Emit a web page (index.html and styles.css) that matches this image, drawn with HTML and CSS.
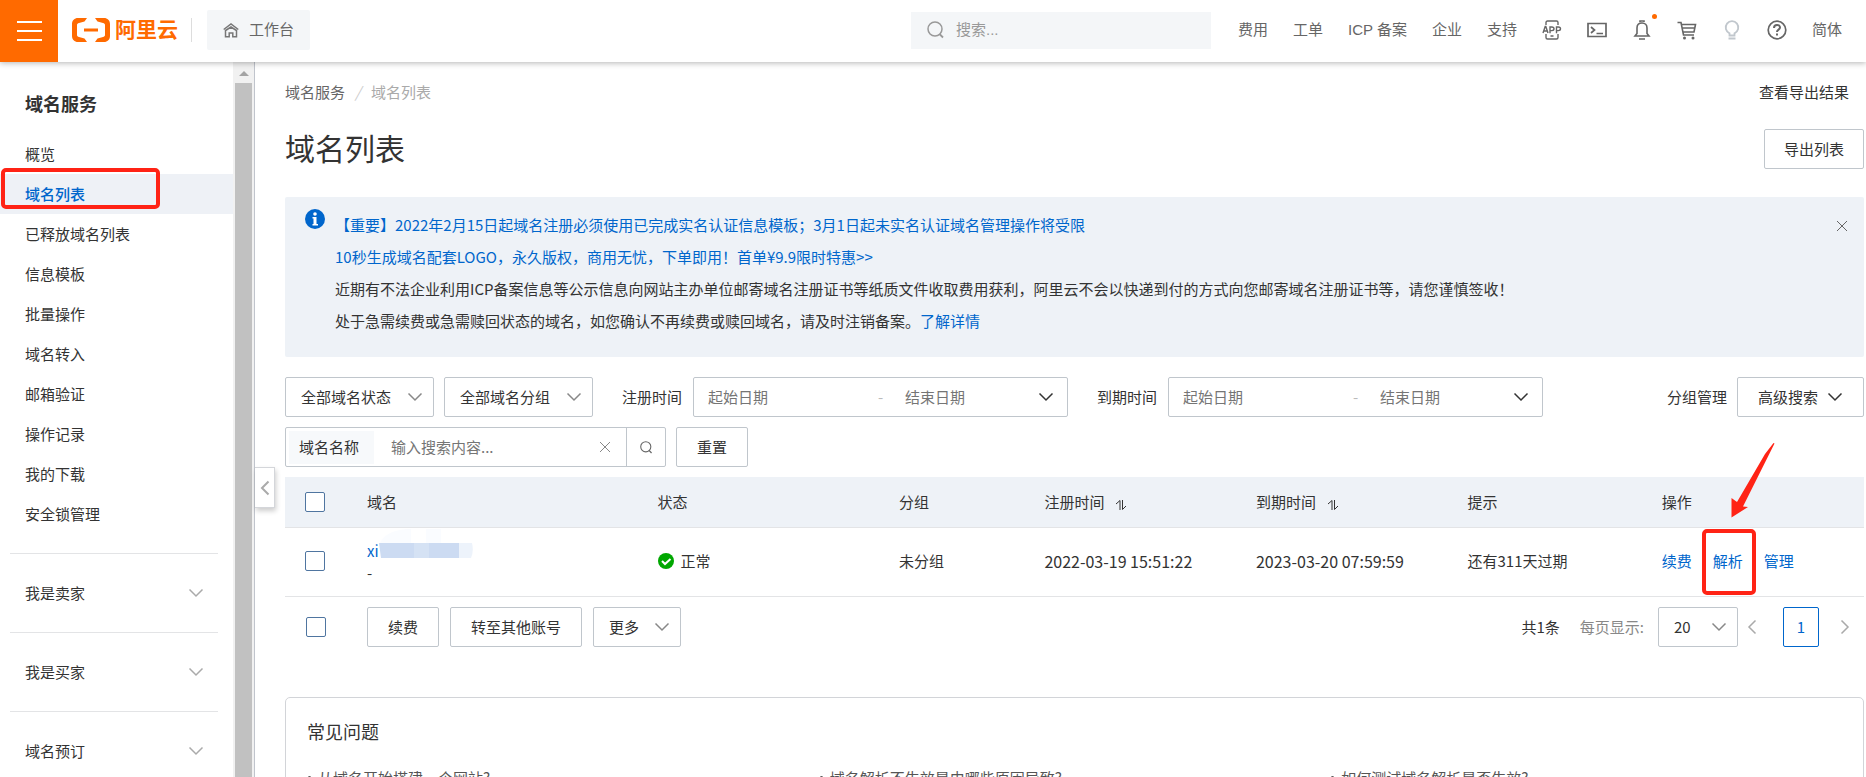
FILE: index.html
```html
<!DOCTYPE html>
<html lang="zh-CN">
<head>
<meta charset="utf-8">
<title>域名列表</title>
<link rel="stylesheet" href="styles.css">
</head>
<body>
<svg class="defs" aria-hidden="true">
  <symbol id="chevron" viewBox="0 0 16 10"><path d="M1.5 1.5 8 8l6.500-6.500" fill="none" stroke="currentColor" stroke-width="1.500"/></symbol>
  <symbol id="cross" viewBox="0 0 12 12"><path d="m1 1 10 10M11 1 1 11" fill="none" stroke="currentColor"/></symbol>
  <symbol id="lens" viewBox="0 0 18 18"><circle cx="8" cy="8" r="7" fill="none" stroke="currentColor" stroke-width="1.500"/><path d="m12.500 13 3.500 3.500" stroke="currentColor" stroke-width="1.800"/></symbol>
  <symbol id="sort" viewBox="0 0 12 12"><path d="M1 5 5 1.500V11M7.500 1v9.500L11 7" fill="none" stroke="currentColor"/></symbol>
</svg>

<header class="topbar">
  <button class="menu-button" aria-label="菜单"><svg width="25" height="20" viewBox="0 0 25 20"><path d="M0 1h25M0 10h25M0 19h25" stroke="#fff" stroke-width="2"/></svg></button>
  <a class="logo" href="#">
    <svg width="38" height="24" viewBox="0 0 38 24"><path d="M15 0H6C2.500 0 0 2.500 0 6v12c0 3.500 2.500 6 6 6h9l-2.500-3.500-5.500-1.500c-1.200-.3-2-1-2-2V7c0-1 .8-1.700 2-2l5.500-1.500zM23 0h9c3.500 0 6 2.500 6 6v12c0 3.500-2.500 6-6 6h-9l2.500-3.500 5.500-1.500c1.200-.3 2-1 2-2V7c0-1-.8-1.700-2-2l-5.500-1.500zM12 10.500h14v3H12z" fill="#ff6a00"/></svg>
    <span>阿里云</span>
  </a>
  <a class="workbench" href="#">
    <svg width="16" height="15" viewBox="0 0 16 15"><path d="M.7 6.500 8 1l7.300 5.500M2.500 7.500v6.300h3.700V10h3.600v3.800h3.700V7.500L8 4z" fill="none" stroke="#777" stroke-width="1.500"/></svg>
    工作台
  </a>
  <label class="top-search"><svg width="18" height="18"><use href="#lens"/></svg><input type="text" placeholder="搜索..." aria-label="搜索"></label>
  <nav class="top-nav">
    <a href="#">费用</a><a href="#">工单</a><a href="#">ICP 备案</a><a href="#">企业</a><a href="#">支持</a>
    <button aria-label="移动应用"><svg width="20" height="20" viewBox="0 0 20 20"><path d="M4 5V2.500Q4 1 5.500 1h9Q16 1 16 2.500V5M4 14v3.500Q4 19 5.500 19h9q1.500 0 1.500-1.500V14M8.500 16h3M1 13l2.200-6.500h.6L6 13M1.800 11h3.500M8 13.200V7h1.800Q12 7 12 8.800t-2.200 1.800H8M14.500 13.200V7h1.800q2.200 0 2.200 1.800t-2.200 1.800h-1.800" fill="none" stroke="currentColor" stroke-width="1.400"/></svg></button>
    <button aria-label="命令行"><svg width="20" height="20" viewBox="0 0 20 20"><path d="M1 3.500h18v13H1zM4 7l3.500 3L4 13M9.500 13.500H16" fill="none" stroke="currentColor" stroke-width="1.700"/></svg></button>
    <button class="bell" aria-label="通知"><svg width="20" height="20" viewBox="0 0 20 20"><path d="M3 16h14l-2-2.500V8c0-3-2-5-5-5S5 5 5 8v5.500zM8 2V1h4v1M7 19h6" fill="none" stroke="currentColor" stroke-width="1.600"/></svg><span class="dot"></span></button>
    <button aria-label="购物车"><svg width="20" height="20" viewBox="0 0 20 20"><path d="M.5 2.500H4L6.500 15H17M5 4.500h13.500L17 12H6M5.500 8h12" fill="none" stroke="currentColor" stroke-width="1.600"/><circle cx="7.500" cy="18" r="1.500" fill="currentColor"/><circle cx="16" cy="18" r="1.500" fill="currentColor"/></svg></button>
    <button class="pale" aria-label="提示"><svg width="20" height="20" viewBox="0 0 20 20"><path d="M7.500 15.500v-2.200a6.300 6.300 0 1 1 5 0v2.200zM6.500 18.500h7" fill="none" stroke="currentColor" stroke-width="1.800"/></svg></button>
    <button aria-label="帮助"><svg width="20" height="20" viewBox="0 0 20 20"><circle cx="10" cy="10" r="8.800" fill="none" stroke="currentColor" stroke-width="1.700"/><path d="M7 8c0-4 6-4 6-.5 0 2.200-3 2-3 4.500M10 13.500v2" fill="none" stroke="currentColor" stroke-width="2"/></svg></button>
    <a href="#">简体</a>
  </nav>
</header>

<div class="shell">
  <aside class="sidebar">
    <div class="side-content">
      <h2>域名服务</h2>
      <nav class="side-nav">
        <a href="#">概览</a>
        <a href="#" class="active">域名列表<span class="mark mark-nav"></span></a>
        <a href="#">已释放域名列表</a>
        <a href="#">信息模板</a>
        <a href="#">批量操作</a>
        <a href="#">域名转入</a>
        <a href="#">邮箱验证</a>
        <a href="#">操作记录</a>
        <a href="#">我的下载</a>
        <a href="#">安全锁管理</a>
      </nav>
      <button class="side-group">我是卖家<svg width="16" height="10"><use href="#chevron"/></svg></button>
      <button class="side-group">我是买家<svg width="16" height="10"><use href="#chevron"/></svg></button>
      <button class="side-group">域名预订<svg width="16" height="10"><use href="#chevron"/></svg></button>
    </div>
    <div class="scrollbar"><span class="scroll-up"></span><span class="scroll-thumb"></span></div>
    <button class="collapse" aria-label="收起"><svg width="10" height="16" viewBox="0 0 10 16"><path d="M8.500 1.500 2 8l6.500 6.500" fill="none" stroke="currentColor" stroke-width="2"/></svg></button>
  </aside>

  <main class="main">
    <div class="crumb-row">
      <div class="crumbs"><a href="#">域名服务</a><i>/</i><span>域名列表</span></div>
      <a class="export-result" href="#">查看导出结果</a>
    </div>
    <div class="title-row"><h1>域名列表</h1><button class="btn export">导出列表</button></div>

    <section class="notice">
      <svg class="info" width="20" height="20" viewBox="0 0 20 20"><circle cx="10" cy="10" r="10" fill="#06c"/><circle cx="10" cy="5" r="1.800" fill="#fff"/><path d="M7.500 8h4v7H13v1.500H7.500V15h1V9.500h-1z" fill="#fff"/></svg>
      <div class="notice-text">
        <p><a href="#">【重要】2022年2月15日起域名注册必须使用已完成实名认证信息模板；3月1日起未实名认证域名管理操作将受限</a></p>
        <p><a href="#">10秒生成域名配套LOGO，永久版权，商用无忧，下单即用！首单¥9.9限时特惠&gt;&gt;</a></p>
        <p>近期有不法企业利用ICP备案信息等公示信息向网站主办单位邮寄域名注册证书等纸质文件收取费用获利，阿里云不会以快递到付的方式向您邮寄域名注册证书等，请您谨慎签收！</p>
        <p>处于急需续费或急需赎回状态的域名，如您确认不再续费或赎回域名，请及时注销备案。<a href="#">了解详情</a></p>
      </div>
      <button class="close" aria-label="关闭"><svg width="12" height="12"><use href="#cross"/></svg></button>
    </section>

    <form class="filters">
      <div class="filter-row">
        <div class="select select-filter"><select aria-label="域名状态"><option>全部域名状态</option></select><svg width="16" height="10"><use href="#chevron"/></svg></div>
        <div class="select select-filter"><select aria-label="域名分组"><option>全部域名分组</option></select><svg width="16" height="10"><use href="#chevron"/></svg></div>
        <div class="date-field"><label for="reg">注册时间</label>
          <div class="range"><input id="reg" type="text" placeholder="起始日期"><span>-</span><input type="text" placeholder="结束日期" aria-label="注册结束日期"><svg width="16" height="10"><use href="#chevron"/></svg></div></div>
        <div class="date-field"><label for="exp">到期时间</label>
          <div class="range"><input id="exp" type="text" placeholder="起始日期"><span>-</span><input type="text" placeholder="结束日期" aria-label="到期结束日期"><svg width="16" height="10"><use href="#chevron"/></svg></div></div>
        <a class="group-link" href="#">分组管理</a>
        <button type="button" class="btn advanced">高级搜索<svg width="16" height="10"><use href="#chevron"/></svg></button>
      </div>
      <div class="filter-row">
        <div class="query"><label for="q">域名名称</label><input id="q" type="text" placeholder="输入搜索内容..."><button type="button" class="clear" aria-label="清除"><svg width="12" height="12"><use href="#cross"/></svg></button><button type="button" class="go" aria-label="搜索"><svg width="13" height="13"><use href="#lens"/></svg></button></div>
        <button type="button" class="btn reset">重置</button>
      </div>
    </form>

    <table class="domains">
      <colgroup><col class="c-check"><col class="c-name"><col class="c-state"><col class="c-group"><col class="c-date"><col class="c-date"><col class="c-tip"><col></colgroup>
      <thead><tr>
        <th><input type="checkbox" aria-label="全选"></th><th>域名</th><th>状态</th><th>分组</th>
        <th>注册时间<svg class="sort" width="12" height="12"><use href="#sort"/></svg></th>
        <th>到期时间<svg class="sort" width="12" height="12"><use href="#sort"/></svg></th>
        <th>提示</th><th>操作</th>
      </tr></thead>
      <tbody><tr>
        <td><input type="checkbox" aria-label="选择域名"></td>
        <td><div class="domain"><a href="#">xi</a><svg width="94" height="36" viewBox="0 0 94 36"><path d="M1 14Q8 0 32 0v14zM47 0h15v14H47z" fill="#fafcff"/><path d="M0 14h35v15H2zM50 14h30v15H50z" fill="#ccdbf2"/><path d="M35 14h15v15H35z" fill="#d5e2f4"/><path d="M80 14h13q2 8-1 15H80z" fill="#edf3fb"/></svg></div><div class="remark">-</div></td>
        <td><span class="state"><svg width="16" height="16" viewBox="0 0 16 16"><circle cx="8" cy="8" r="8" fill="#00a700"/><path d="m4 8 3 3 5.500-5" fill="none" stroke="#fff" stroke-width="2"/></svg>正常</span></td>
        <td>未分组</td>
        <td class="num">2022-03-19 15:51:22</td>
        <td class="num">2023-03-20 07:59:59</td>
        <td>还有311天过期</td>
        <td><div class="actions"><a href="#">续费</a><a class="resolve" href="#">解析<span class="mark mark-action"></span><svg class="arrow" width="44" height="75" viewBox="0 0 44 75"><path d="M42.500 0 34 11 6 59 .5 55v19.500L17 64l-5-.5 31.500-63z" fill="#ff2315"/></svg></a><a href="#">管理</a></div></td>
      </tr></tbody>
    </table>

    <div class="table-foot">
      <input type="checkbox" aria-label="全选本页">
      <div class="batch">
        <button class="btn">续费</button><button class="btn">转至其他账号</button>
        <div class="select select-more"><select aria-label="更多操作"><option>更多</option></select><svg width="16" height="10"><use href="#chevron"/></svg></div>
      </div>
      <div class="pager">
        <span>共1条</span><label for="size">每页显示:</label>
        <div class="select select-size"><select id="size"><option>20</option></select><svg width="16" height="10"><use href="#chevron"/></svg></div>
        <button class="turn" aria-label="上一页"><svg width="10" height="16" viewBox="0 0 10 16"><path d="M8.500 1.500 2 8l6.500 6.500" fill="none" stroke="currentColor" stroke-width="1.500"/></svg></button>
        <button class="page">1</button>
        <button class="turn" aria-label="下一页"><svg width="10" height="16" viewBox="0 0 10 16"><path d="M1.500 1.500 8 8l-6.500 6.500" fill="none" stroke="currentColor" stroke-width="1.500"/></svg></button>
      </div>
    </div>

    <section class="faq">
      <h3>常见问题</h3>
      <ul class="faq-list"><li><a href="#">从域名开始搭建一个网站?</a></li><li><a href="#">域名解析不生效是由哪些原因导致?</a></li><li><a href="#">如何测试域名解析是否生效?</a></li></ul>
    </section>
  </main>
</div>
</body>
</html>
```

FILE: styles.css
```css
* { box-sizing: border-box; }
body {
  margin: 0;
  height: 100vh;
  display: flex;
  flex-direction: column;
  overflow: hidden;
  background: #fff;
  color: #333;
  font: 15px/20px "Noto Sans CJK SC", sans-serif;
}
a { color: #06c; text-decoration: none; }
button, input, select { font: inherit; color: inherit; }
button { padding: 0; border: 0; background: none; }
svg { display: block; flex: none; }
h1, h2, h3, p { margin: 0; font-weight: 400; }
.defs { position: absolute; width: 0; height: 0; }

.topbar {
  position: relative;
  z-index: 2;
  flex: none;
  height: 62px;
  display: flex;
  align-items: center;
  padding-bottom: 2px;
  box-shadow: 0 1px 6px rgba(0, 0, 0, .3);
  background: #fff;
  color: #666;
  font-family: "Liberation Sans", "Noto Sans CJK SC", sans-serif;
}
.topbar a { color: #666; }
.menu-button { align-self: stretch; width: 58px; margin-bottom: -2px; display: grid; place-items: center; background: #ff6a00; }
.topbar .logo {
  display: flex;
  align-items: center;
  gap: 5px;
  margin-left: 14px;
  padding-right: 13px;
  border-right: 1px solid #ddd;
  color: #ff6a00;
  font-size: 21px;
  font-weight: 700;
}
.workbench {
  display: flex;
  align-items: center;
  gap: 10px;
  height: 40px;
  margin-left: 15px;
  padding: 0 16px;
  border-radius: 2px;
  background: #f4f6f8;
}
.top-search {
  display: flex;
  align-items: center;
  gap: 11px;
  width: 300px;
  height: 37px;
  margin-left: auto;
  padding: 0 16px;
  background: #f4f6f8;
  color: #999;
}
.top-search input { flex: 1; min-width: 0; border: 0; background: none; padding: 0; }
input::placeholder { color: #757575; opacity: 1; }
.top-search input::placeholder { color: #999; }
.top-nav { display: flex; align-items: center; gap: 25px; padding: 0 24px 0 27px; white-space: nowrap; }
.top-nav .pale { color: #c1c7cd; }
.bell { position: relative; }
.dot { position: absolute; top: -6px; right: -5px; width: 5px; height: 5px; border-radius: 50%; background: #ff6a00; }

.shell { flex: 1; min-height: 0; display: flex; }
.sidebar { position: relative; flex: none; width: 255px; display: flex; border-right: 1px solid #c0c4cc; }
.side-content { flex: 1; overflow: hidden; }
.side-content h2 { padding: 31px 25px 21px; font-size: 18px; line-height: 20px; font-weight: 700; }
.side-nav { margin-bottom: 19px; }
.side-nav a { display: block; position: relative; padding: 10px 25px; color: #333; }
.side-nav .active { background: #eef1f6; color: #06c; font-weight: 500; }
.mark { position: absolute; border: 4px solid #ff2315; border-radius: 5px; }
.mark-nav { left: 1px; top: -6px; width: 159px; height: 41px; }
.side-group {
  display: flex;
  align-items: center;
  justify-content: space-between;
  width: 208px;
  height: 79px;
  margin: 0 10px;
  padding: 0 14px 0 15px;
  border-top: 1px solid #e3e4e6;
}
.side-group svg, .collapse { color: #aaa; }
.scrollbar { width: 21px; display: flex; flex-direction: column; align-items: center; padding-top: 9px; background: #f1f1f1; }
.scroll-up { border: 5px solid transparent; border-top: 0; border-bottom-color: #a3a3a3; }
.scroll-thumb { flex: 1; width: 17px; margin-top: 7px; background: #c1c1c1; }
.collapse {
  position: absolute;
  z-index: 1;
  left: 255px;
  top: 405px;
  width: 20px;
  height: 41px;
  display: grid;
  place-items: center;
  border: 1px solid #d4d6da;
  border-left: 0;
  background: #fff;
  box-shadow: 1px 3px 5px rgba(0, 0, 0, .2);
}

.main { flex: 1; min-width: 0; padding: 20px 2px 0 30px; }
.crumb-row, .title-row { display: flex; justify-content: space-between; align-items: center; }
.crumb-row { padding-right: 15px; }
.crumbs { display: flex; gap: 10px; color: #aaa; }
.crumbs i { color: #ccc; }
.crumbs a { color: #666; }
.export-result, .group-link { color: #333; }
.title-row { align-items: flex-end; height: 67px; margin-bottom: 28px; }
h1 { font-size: 30px; line-height: 44px; }
.btn {
  height: 40px;
  padding: 0 20px;
  border: 1px solid #c0c6cc;
  border-radius: 2px;
  background: #fff;
  white-space: nowrap;
}
.export { padding: 0 19px; }

.notice { display: flex; align-items: flex-start; padding: 12px 16px 20px 20px; border-radius: 2px; background: #eef2f7; }
.notice-text { flex: 1; margin-left: 10px; line-height: 32px; }
.close { margin-top: 11px; color: #666; }

.filters { display: flex; flex-direction: column; gap: 10px; margin: 20px 0 10px; }
.filter-row { display: flex; align-items: center; gap: 10px; white-space: nowrap; }
.select { display: grid; align-items: center; height: 40px; border: 1px solid #c0c6cc; border-radius: 2px; }
.select > * { grid-area: 1 / 1; }
.select select { appearance: none; width: 100%; height: 38px; padding: 0 15px; border: 0; background: none; }
.select svg { justify-self: end; margin-right: 10px; color: #888; pointer-events: none; }
.select-filter { width: 149px; }
.date-field { display: flex; align-items: center; gap: 11px; margin-left: 19px; }
.range { display: flex; align-items: center; width: 375px; height: 40px; padding: 0 13px 0 14px; border: 1px solid #c0c6cc; border-radius: 2px; }
.range input { flex: 1; min-width: 0; padding: 0; border: 0; background: none; }
.range input:first-child { flex: 0 1 170px; }
.range span { width: 27px; color: #bbb; }
.group-link { margin-left: auto; }
.advanced { display: flex; align-items: center; gap: 9px; }
.query { display: flex; align-items: center; width: 381px; height: 40px; padding-left: 3px; border: 1px solid #c0c6cc; border-radius: 2px; }
.query label { height: 33px; padding: 6px 15px 6px 10px; background: #f7f9fb; }
.query input { flex: 1; min-width: 0; margin-left: 17px; padding: 0; border: 0; background: none; }
.clear { margin-right: 15px; color: #888; }
.go { width: 39px; height: 38px; display: grid; place-items: center; border-left: 1px solid #c0c6cc; color: #666; }

.domains { width: 100%; table-layout: fixed; border-collapse: collapse; }
.c-check { width: 62px; }
.c-name { width: 18.4%; }
.c-state { width: 15.3%; }
.c-group { width: 9.2%; }
.c-date { width: 13.4%; }
.c-tip { width: 12.3%; }
.domains th, .domains td { padding: 0 0 0 20px; border-bottom: 1px solid #e3e4e6; text-align: left; font-weight: 400; }
.domains th { height: 50px; background: #eef2f7; }
.domains td { height: 69px; padding-bottom: 2px; }
.domains .num { font-size: 16px; }
input[type="checkbox"] { appearance: none; display: block; width: 20px; height: 20px; margin: 0; border: 1px solid #4f75a0; border-radius: 2px; background: #fff; }
.sort { display: inline-block; margin-left: 11px; vertical-align: -3px; }
.domain { display: flex; align-items: center; height: 24px; }
.domain svg { margin-top: -8px; }
.remark { line-height: 20px; }
.state { display: flex; align-items: center; gap: 7px; }
.actions { display: flex; gap: 21px; }
.resolve { position: relative; }
.mark-action { left: -11px; top: -22px; width: 54px; height: 66px; }
.arrow { position: absolute; left: 18px; top: -108px; }

.table-foot { display: flex; align-items: center; padding: 10px 5px 50px 21px; white-space: nowrap; }
.batch { display: flex; gap: 11px; margin-left: 41px; }
.select-more { width: 88px; }
.pager { display: flex; align-items: center; margin-left: auto; }
.pager label { margin: 0 14px 0 20px; color: #888; }
.select-size { width: 80px; }
.turn { width: 28px; display: grid; place-items: center; color: #aaa; }
.page { width: 36px; height: 40px; margin: 0 12px 0 17px; border: 1px solid #06c; border-radius: 2px; color: #06c; }

.faq { padding: 23px 21px; border: 1px solid #d2d4d8; border-radius: 5px; }
.faq h3 { font-size: 18px; line-height: 20px; }
.faq-list { display: grid; grid-template-columns: repeat(3, 1fr); margin: 27px 0 0; padding: 0; list-style: none; }
.faq-list li { display: flex; align-items: center; gap: 7px; }
.faq-list li::before { content: ""; width: 3px; height: 3px; margin-left: 1px; border-radius: 50%; background: #555; }
.faq-list a { color: #555; }
```
